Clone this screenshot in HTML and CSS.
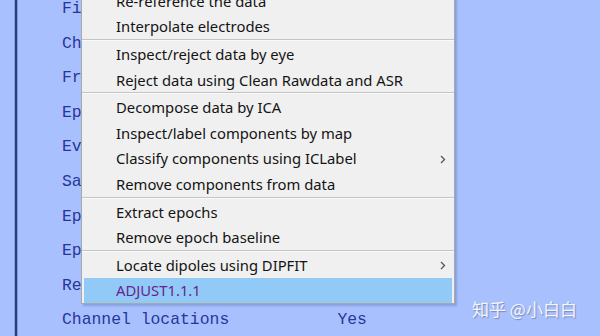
FILE: index.html
```html
<!DOCTYPE html>
<html lang="en">
<head>
    <meta charset="UTF-8">
    <meta name="viewport" content="width=device-width, initial-scale=1.0">
    <title>EEGLAB Tools menu</title>
    <link rel="stylesheet" href="styles.css">
</head>
<body>
    <!-- Main window behind the menu -->
    <div class="window">
        <div class="rail"></div>
<pre class="info">Filename: none
Channels per frame          32
Frames per epoch            30504
Epochs                      1
Events                      154
Sampling rate (Hz)          250
Epoch start (sec)           0.000
Epoch end (sec)             122.012
Reference                   unknown
Channel locations           Yes</pre>
    </div>

    <!-- Tools popup menu -->
    <div class="menu">
        <div class="item">Re-reference the data</div>
        <div class="item">Interpolate electrodes</div>
        <div class="sep"></div>
        <div class="item">Inspect/reject data by eye</div>
        <div class="item">Reject data using Clean Rawdata and ASR</div>
        <div class="sep"></div>
        <div class="item">Decompose data by ICA</div>
        <div class="item">Inspect/label components by map</div>
        <div class="item sub">Classify components using ICLabel
            <svg class="arrow" width="6" height="9" viewBox="0 0 6 9"><polyline points="1,1 4.5,4.5 1,8" fill="none" stroke="#555" stroke-width="1.3"/></svg>
        </div>
        <div class="item">Remove components from data</div>
        <div class="sep"></div>
        <div class="item">Extract epochs</div>
        <div class="item">Remove epoch baseline</div>
        <div class="sep"></div>
        <div class="item sub">Locate dipoles using DIPFIT
            <svg class="arrow" width="6" height="9" viewBox="0 0 6 9"><polyline points="1,1 4.5,4.5 1,8" fill="none" stroke="#555" stroke-width="1.3"/></svg>
        </div>
        <div class="item active">ADJUST1.1.1</div>
    </div>

    <div class="watermark">知乎 @小白白</div>
</body>
</html>
```

FILE: styles.css
```css
body {
    margin: 0;
    width: 600px;
    height: 336px;
    overflow: hidden;
    background: #a9c0fe;
    position: relative;
}
.window {
    display: flex;
    height: 100%;
}
.rail {
    width: 2px;
    margin-left: 15px;
    background: #22407a;
    box-shadow: 1px 0 0 #7f9ad6, -1px 0 0 #8aa4e0;
}
.info {
    margin: -8px 0 0 45px;
    font-family: "Liberation Mono", "Courier New", monospace;
    font-size: 16.4px;
    line-height: 34.6px;
    color: #28369a;
}
.menu {
    position: absolute;
    left: 81px;
    top: -13px;
    width: 372px;
    background: #f0f0f0;
    border: 1px solid #a8a8a8;
    box-shadow: 2px 2px 2px rgba(40, 60, 120, 0.25);
    font-family: "Noto Sans", "Open Sans", sans-serif;
    font-size: 14.8px;
    color: #141414;
}
.item {
    height: 25.6px;
    display: flex;
    align-items: center;
    padding-left: 32px;
    margin: 0 2px;
    position: relative;
}
.sep {
    height: 1px;
    background: #c4c4c4;
    border-bottom: 1px solid #fafafa;
}
.sub .arrow {
    position: absolute;
    right: 6px;
    top: 9px;
}
.active {
    background: #91c9f7;
    color: #6b1f8e;
}
.watermark {
    position: absolute;
    left: 472px;
    top: 296px;
    font-family: "Noto Sans CJK SC", sans-serif;
    font-size: 17px;
    color: #f4f6fb;
    text-shadow: 1px 1px 1px rgba(60, 70, 110, 0.45);
}
```
